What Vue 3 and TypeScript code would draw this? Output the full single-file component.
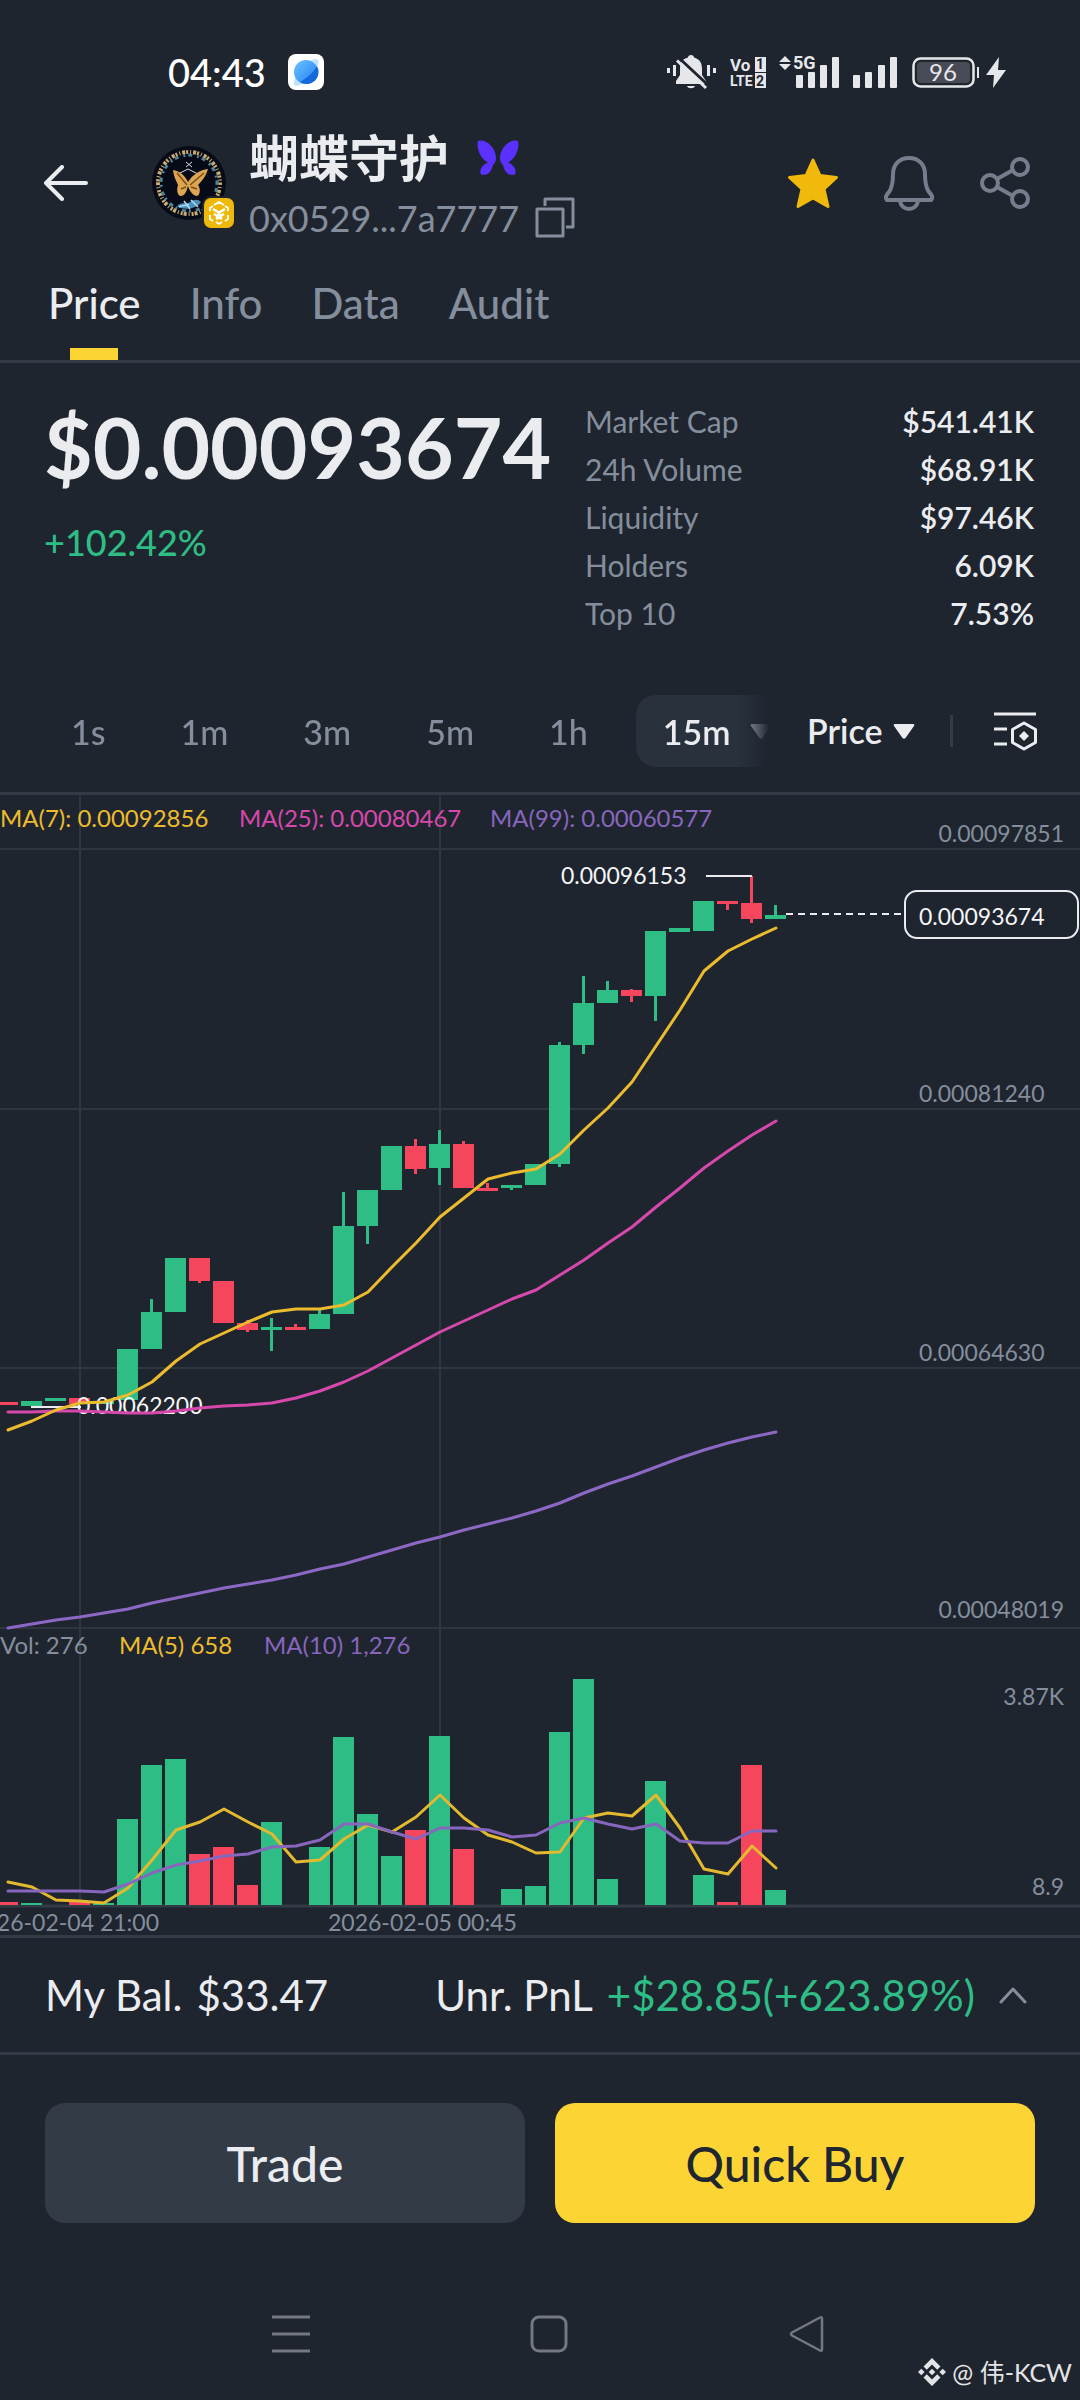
<script setup lang="ts">
import { ref } from 'vue'

interface Candle {
  up: boolean
  top: number
  bottom: number
  high?: number
  low?: number
  volTop?: number
}

const tabs = ['Price', 'Info', 'Data', 'Audit']
const activeTab = ref('Price')

const stats = [
  { label: 'Market Cap', value: '$541.41K' },
  { label: '24h Volume', value: '$68.91K' },
  { label: 'Liquidity', value: '$97.46K' },
  { label: 'Holders', value: '6.09K' },
  { label: 'Top 10', value: '7.53%' },
]

const intervals = ['1s', '1m', '3m', '5m', '1h', '15m']
const activeInterval = ref('15m')
const priceMode = ref('Price')

// Candles are spaced STEP apart; vertical values are chart units from the top edge.
const STEP = 24
const FIRST = 8
const BODY = 21
const VOL_BASE = 1110

const candles: Candle[] = [
  { up: false, top: 607, bottom: 610, volTop: 1107 },
  { up: true, top: 606, bottom: 611, volTop: 1108 },
  { up: true, top: 603, bottom: 606 },
  { up: false, top: 603, bottom: 609, volTop: 1107 },
  { up: true, top: 606, bottom: 609, volTop: 1108 },
  { up: true, top: 554, bottom: 605, volTop: 1024 },
  { up: true, top: 517, bottom: 554, high: 504, volTop: 970 },
  { up: true, top: 463, bottom: 517, volTop: 964 },
  { up: false, top: 463, bottom: 486, low: 488, volTop: 1059 },
  { up: false, top: 486, bottom: 528, volTop: 1052 },
  { up: false, top: 528, bottom: 535, high: 525, low: 537, volTop: 1090 },
  { up: true, top: 532, bottom: 535, high: 523, low: 556, volTop: 1027 },
  { up: false, top: 532, bottom: 535, high: 529 },
  { up: true, top: 519, bottom: 534, high: 514, volTop: 1052 },
  { up: true, top: 431, bottom: 519, high: 397, volTop: 942 },
  { up: true, top: 395, bottom: 431, low: 449, volTop: 1019 },
  { up: true, top: 351, bottom: 395, volTop: 1061 },
  { up: false, top: 351, bottom: 374, high: 344, low: 379, volTop: 1035 },
  { up: true, top: 349, bottom: 373, high: 335, low: 390, volTop: 941 },
  { up: false, top: 349, bottom: 393, high: 346, volTop: 1054 },
  { up: false, top: 393, bottom: 396, high: 388 },
  { up: true, top: 390, bottom: 393, low: 395, volTop: 1094 },
  { up: true, top: 369, bottom: 390, volTop: 1091 },
  { up: true, top: 250, bottom: 369, high: 247, low: 372, volTop: 937 },
  { up: true, top: 208, bottom: 250, high: 181, low: 259, volTop: 884 },
  { up: true, top: 195, bottom: 208, high: 186, volTop: 1084 },
  { up: false, top: 195, bottom: 201, high: 194, low: 207 },
  { up: true, top: 136, bottom: 201, low: 226, volTop: 986 },
  { up: true, top: 133, bottom: 137 },
  { up: true, top: 106, bottom: 136, volTop: 1080 },
  { up: false, top: 106, bottom: 109, low: 115, volTop: 1107 },
  { up: false, top: 108, bottom: 124, high: 81, low: 128, volTop: 970 },
  { up: true, top: 120, bottom: 124, high: 110, volTop: 1095 },
]

const ma7 = [635, 626, 615, 608, 607, 600, 587, 566, 549, 538, 527, 517, 514, 514, 510, 497, 472, 448, 422, 403, 384, 378, 374, 359, 335, 313, 287, 251, 215, 176, 156, 144, 133]
const ma25 = [617, 617, 616, 616, 617, 618, 618, 616, 613, 611, 610, 608, 603, 596, 587, 576, 563, 550, 537, 526, 515, 504, 495, 480, 465, 448, 432, 412, 393, 373, 356, 340, 326]
const ma99 = [833, 829, 825, 822, 818, 814, 808, 803, 798, 793, 789, 785, 780, 774, 769, 762, 755, 748, 742, 735, 729, 723, 716, 708, 698, 689, 681, 672, 663, 655, 648, 642, 637]
const volMa5 = [1087, 1092, 1105, 1106, 1108, 1093, 1065, 1035, 1027, 1014, 1027, 1039, 1067, 1065, 1044, 1030, 1037, 1022, 1000, 1023, 1040, 1047, 1058, 1057, 1023, 1018, 1021, 1000, 1033, 1074, 1079, 1051, 1073]
const volMa10 = [1096, 1096, 1096, 1096, 1097, 1089, 1078, 1070, 1066, 1061, 1059, 1052, 1051, 1045, 1029, 1029, 1037, 1044, 1033, 1033, 1035, 1042, 1040, 1028, 1023, 1029, 1034, 1029, 1046, 1048, 1048, 1036, 1036]

const xAt = (i: number): number => FIRST + i * STEP
const line = (values: number[]): string => values.map((v, i) => `${xAt(i)},${v}`).join(' ')
</script>

<template>
  <div class="screen">
    <div class="status">
      <div class="status-left">
        <span class="clock">04:43</span>
        <svg class="app-icon" viewBox="0 0 36 36" aria-hidden="true">
          <defs>
            <linearGradient id="globe" x1="0" y1="0" x2="1" y2="1">
              <stop offset="0" stop-color="#6cc4ff" />
              <stop offset="1" stop-color="#1f7cf2" />
            </linearGradient>
          </defs>
          <rect width="36" height="36" rx="8" fill="#fff" />
          <path d="M6 31c-1-3 1-7 3-10l7 8c-4 2-8 4-10 2z" fill="#bfe4fb" />
          <path d="M30 6c1 2 0 6-2 9l-6-8c3-2 6-3 8-1z" fill="#bfe4fb" />
          <circle cx="18" cy="18" r="12" fill="url(#globe)" />
          <path d="M29 12a12 12 0 0 1-17 16c7-4 13-9 17-16z" fill="#1568dc" />
        </svg>
      </div>
      <svg class="status-icons" viewBox="0 0 340 34" aria-hidden="true">
        <g fill="#e6e7ea">
          <path d="M24 0c1.700 0 3 1 3 2.500 6 1.500 8 6 8 11.500v6l4 6v3H9v-3l4-6v-6C13 8 15 4 21 2.500 21 1 22.300 0 24 0zM20 31h8c-1 3-7 3-8 0z" />
          <rect x="0" y="13" width="3" height="5" />
          <rect x="6" y="10" width="3" height="11" />
          <rect x="40" y="10" width="3" height="11" />
          <rect x="46" y="13" width="3" height="5" />
        </g>
        <path d="M12 3 41 30" stroke="#1f252f" stroke-width="3" />
        <path d="M10 5.500 39 33" stroke="#e6e7ea" stroke-width="3" />
        <g class="network" fill="#e6e7ea">
          <text x="63" y="16" font-size="17">Vo</text>
          <text x="63" y="31" font-size="14">LTE</text>
          <rect x="88" y="2" width="11" height="15" />
          <rect x="88" y="18" width="11" height="15" />
          <text x="126" y="14" font-size="18">5G</text>
          <path d="M118 1l6 6h-12zM118 15l6-6h-12z" />
          <rect x="129" y="20" width="7" height="13" rx="1" />
          <rect x="141" y="17" width="7" height="16" rx="1" />
          <rect x="153" y="10" width="7" height="23" rx="1" />
          <rect x="165" y="2" width="7" height="31" rx="1" />
          <rect x="186" y="20" width="7" height="13" rx="1" />
          <rect x="198" y="17" width="7" height="16" rx="1" />
          <rect x="211" y="10" width="7" height="23" rx="1" />
          <rect x="223" y="2" width="7" height="31" rx="1" />
          <rect x="310" y="12" width="2" height="11" />
          <path d="M332 2 319 20h8l-1 13 13-18h-8z" />
        </g>
        <g class="network" fill="#1f252f" text-anchor="middle" font-size="14">
          <text x="93" y="14">1</text>
          <text x="93" y="31">2</text>
        </g>
        <rect x="246.500" y="3.500" width="60" height="28" rx="7" fill="none" stroke="#e6e7ea" stroke-width="2.500" />
        <rect x="250" y="7" width="53" height="21" rx="4" fill="#484b55" />
        <text class="battery" x="276" y="26" text-anchor="middle" fill="#e6e7ea">96</text>
      </svg>
    </div>

    <header class="header">
      <button class="icon-btn back" aria-label="Back">
        <svg width="46" height="36" viewBox="0 0 46 36" fill="none" stroke="#eaecef" stroke-width="4" stroke-linecap="round" stroke-linejoin="round">
          <path d="M43 18H3M19 2 3 18l16 16" />
        </svg>
      </button>
      <svg class="avatar" viewBox="0 0 84 84" aria-hidden="true">
        <circle cx="38" cy="38" r="37" fill="#070b17" />
        <circle cx="38" cy="38" r="31" fill="none" stroke="#c9ac70" stroke-width="4" stroke-dasharray="2 2 1 2 3 1" />
        <circle cx="38" cy="38" r="28" fill="none" stroke="#4e8494" stroke-width="3" stroke-dasharray="2 3 4 5" />
        <path d="M35 17l6 5m0-5-6 5M27 29l10-5 10 5" stroke="#d8dbe0" stroke-width="1" fill="none" />
        <path d="M37 37C33 29 28 26 22 25c1 8 4 12 5 15-2 6 0 11 3 11 4 0 6-6 7-10 1 4 5 10 9 10 3-1 4-7 1-11 4-4 8-9 10-16-8 1-15 5-20 13z" fill="#dca552" />
        <path d="M26 28l10 12M53 28 39 40M30 44l5-2M46 44l-6-2" stroke="#7b4c16" stroke-width="1.500" />
        <path d="M26 61c5-5 9-1 13-4s8-3 11 0c-4 7-18 9-24 4z" fill="#4b91bd" />
        <path d="M28 62c5-3 7 0 10-3M40 55l7 7M33 56l6 8" stroke="#b4daf0" stroke-width="1.500" fill="none" />
        <rect x="51" y="51" width="33" height="33" rx="9" fill="#1f252f" />
        <rect x="53" y="53" width="30" height="30" rx="7" fill="#efb90b" />
        <g fill="none" stroke="#fff" stroke-width="1.800">
          <path d="M63 60l5-3 5 3M59 66v-3l3-2M77 66v-3l-3-2M59 70v4l3 2M77 70v4l-3 2M65 77l3 2 3-2" />
          <path d="M62 64l6 3.500 6-3.500M68 67v7M63 69l3 1.500v4M73 69l-3 1.500v4" stroke-width="2.500" />
        </g>
      </svg>
      <div class="identity">
        <div class="name-row">
          <h1 class="name">蝴蝶守护</h1>
          <svg width="42" height="36" viewBox="0 0 42 36" fill="#5a31ff" aria-hidden="true">
            <path d="M1 1c7-3 18 6 18 17 0 3-1 5-3 7-2 8-6 11-12 9.500-2-4 1-10 7-12C4 19-1 9 1 1z" />
            <path d="M41 1c-7-3-18 6-18 17 0 3 1 5 3 7 2 8 6 11 12 9.500 2-4-1-10-7-12C38 19 43 9 41 1z" />
          </svg>
        </div>
        <div class="address-row">
          <span class="address">0x0529...7a7777</span>
          <button class="icon-btn" aria-label="Copy address">
            <svg width="40" height="42" viewBox="0 0 40 42" fill="none" stroke="#848e9c" stroke-width="3" stroke-linejoin="round">
              <rect x="2" y="12" width="26" height="27" />
              <path d="M10 9V2h28v28h-7" />
            </svg>
          </button>
        </div>
      </div>
      <div class="actions">
        <button class="icon-btn" aria-label="Favourite">
          <svg width="52" height="52" viewBox="0 0 52 52" fill="#f0b90b" stroke="#f0b90b" stroke-width="3" stroke-linejoin="round">
            <path d="M26 3l7 15.500 16.500 2L37 32l4 17.500L26 41l-15 8.500L15 32 2.500 20.500l16.500-2z" />
          </svg>
        </button>
        <button class="icon-btn" aria-label="Alerts">
          <svg width="52" height="56" viewBox="0 0 52 56" fill="none" stroke="#767e8e" stroke-width="4" stroke-linejoin="round">
            <path d="M26 3c-10 0-16 7-16 16 0 9-1 14-4 18-3 3-4 6-2 8h44c2-2 1-5-2-8-3-4-4-9-4-18 0-9-6-16-16-16zM17 45c1 12 17 12 18 0" />
          </svg>
        </button>
        <button class="icon-btn" aria-label="Share">
          <svg width="52" height="52" viewBox="0 0 52 52" fill="none" stroke="#767e8e" stroke-width="4">
            <circle cx="11" cy="26" r="8" />
            <circle cx="41" cy="10" r="8" />
            <circle cx="41" cy="42" r="8" />
            <path d="M18 22l16-9M18 30l16 9" />
          </svg>
        </button>
      </div>
    </header>

    <nav class="tabs">
      <button
        v-for="tab in tabs"
        :key="tab"
        class="tab"
        :class="{ active: tab === activeTab }"
        @click="activeTab = tab"
      >
        {{ tab }}
      </button>
    </nav>

    <section class="summary">
      <div>
        <div class="price">$0.00093674</div>
        <div class="change">+102.42%</div>
      </div>
      <dl class="stats">
        <div v-for="stat in stats" :key="stat.label" class="stat">
          <dt>{{ stat.label }}</dt>
          <dd>{{ stat.value }}</dd>
        </div>
      </dl>
    </section>

    <div class="toolbar">
      <div class="intervals">
        <button
          v-for="item in intervals"
          :key="item"
          class="interval"
          :class="{ active: item === activeInterval }"
          @click="activeInterval = item"
        >
          {{ item }}
          <svg v-if="item === '15m'" width="22" height="15" viewBox="0 0 22 15" fill="#aab0b9" aria-hidden="true">
            <path d="M2 0h18q2 0 1 2L12.500 14q-1.500 1.500-3 0L1 2Q0 0 2 0z" />
          </svg>
        </button>
      </div>
      <label class="mode">
        <select v-model="priceMode" aria-label="Chart value">
          <option>Price</option>
        </select>
        <svg width="22" height="15" viewBox="0 0 22 15" fill="#eaecef" aria-hidden="true">
          <path d="M2 0h18q2 0 1 2L12.500 14q-1.500 1.500-3 0L1 2Q0 0 2 0z" />
        </svg>
      </label>
      <span class="divider"></span>
      <button class="icon-btn" aria-label="Chart settings">
        <svg width="44" height="40" viewBox="0 0 44 40" fill="none" stroke="#eaecef" stroke-width="3">
          <path d="M1 3h42M1 18h13M1 33h13" />
          <path d="M31 12l11.500 6.500v13L31 38l-11.500-6.500v-13z" stroke-linejoin="round" />
          <path d="M31 20l5 5-5 5-5-5z" fill="#eaecef" stroke="none" />
        </svg>
      </button>
    </div>

    <svg class="chart" viewBox="0 0 1080 1140" role="img" aria-label="Price and volume chart">
      <g stroke="#2f363f" stroke-width="2">
        <path d="M80 0V1110M440 0V1110" />
        <path d="M0 54H1080M0 314H1080M0 573H1080M0 833H1080" />
        <path d="M0 1111H1080" stroke="#333b47" stroke-width="3" />
      </g>

      <g v-for="(c, i) in candles" :key="i" :class="c.up ? 'up' : 'down'">
        <rect :x="xAt(i) - 11" :y="c.top" :width="BODY" :height="c.bottom - c.top" />
        <rect :x="xAt(i) - 2" :y="c.high ?? c.top" width="3" :height="(c.low ?? c.bottom) - (c.high ?? c.top)" />
        <rect v-if="c.volTop" :x="xAt(i) - 11" :y="c.volTop" :width="BODY" :height="VOL_BASE - c.volTop" />
      </g>

      <g stroke="#eaecef" stroke-width="2" fill="none">
        <path d="M706 81h46M31 612h50" />
        <path d="M786 119H904" stroke-dasharray="7 5" />
        <rect x="905" y="96" width="173" height="47" rx="12" />
      </g>
      <g class="axis" fill="#f5f6f7">
        <text x="561" y="89">0.00096153</text>
        <text x="919" y="130">0.00093674</text>
        <text x="77" y="619">0.00062200</text>
      </g>

      <g fill="none" stroke-width="3" stroke-linejoin="round" stroke-linecap="round">
        <polyline :points="line(ma99)" stroke="#8c68c4" />
        <polyline :points="line(ma25)" stroke="#d648ab" />
        <polyline :points="line(ma7)" stroke="#ecbc2e" />
        <polyline :points="line(volMa5)" stroke="#e3b92f" />
        <polyline :points="line(volMa10)" stroke="#8766bd" />
      </g>

      <g class="legend">
        <text x="0" y="32" fill="#ecbc2e">MA(7): 0.00092856</text>
        <text x="239" y="32" fill="#d648ab">MA(25): 0.00080467</text>
        <text x="490" y="32" fill="#8766bd">MA(99): 0.00060577</text>
        <text x="0" y="859" fill="#848e9c">Vol: 276</text>
        <text x="119" y="859" fill="#ecbc2e">MA(5) 658</text>
        <text x="264" y="859" fill="#8766bd">MA(10) 1,276</text>
      </g>
      <g class="axis" fill="#848e9c">
        <text x="1064" y="47" text-anchor="end">0.00097851</text>
        <text x="919" y="307">0.00081240</text>
        <text x="919" y="566">0.00064630</text>
        <text x="1064" y="823" text-anchor="end">0.00048019</text>
        <text x="1064" y="910" text-anchor="end">3.87K</text>
        <text x="1064" y="1100" text-anchor="end">8.9</text>
        <text x="159" y="1136" text-anchor="end">2026-02-04 21:00</text>
        <text x="328" y="1136">2026-02-05 00:45</text>
      </g>
    </svg>

    <section class="balance">
      <div class="pair"><span>My Bal.</span><span>$33.47</span></div>
      <div class="pnl">
        <span>Unr. PnL</span>
        <span class="gain">+$28.85(+623.89%)</span>
        <button class="icon-btn" aria-label="Expand">
          <svg width="28" height="18" viewBox="0 0 28 18" fill="none" stroke="#848e9c" stroke-width="3" stroke-linecap="round" stroke-linejoin="round">
            <path d="M2 16 14 3l12 13" />
          </svg>
        </button>
      </div>
    </section>

    <div class="cta">
      <button class="trade">Trade</button>
      <button class="buy">Quick Buy</button>
    </div>

    <nav class="system">
      <button class="icon-btn" aria-label="Recents">
        <svg width="38" height="38" viewBox="0 0 38 38" stroke="#75787e" stroke-width="3"><path d="M0 2h38M0 19h38M0 36h38" /></svg>
      </button>
      <button class="icon-btn" aria-label="Home">
        <svg width="38" height="38" viewBox="0 0 38 38" fill="none" stroke="#75787e" stroke-width="3"><rect x="2" y="2" width="34" height="34" rx="7" /></svg>
      </button>
      <button class="icon-btn" aria-label="Back">
        <svg width="38" height="38" viewBox="0 0 38 38" fill="none" stroke="#75787e" stroke-width="2.500" stroke-linejoin="round"><path d="M34 3.500v31q0 2-2 1L4 20.500q-2-1.500 0-3L32 2.500q2-1 2 1z" /></svg>
      </button>
    </nav>

    <footer class="credit">
      <svg width="28" height="28" viewBox="0 0 28 28" fill="#e3e4e6" aria-hidden="true">
        <path d="M14 0l8.500 8.500-3.300 3.300L14 6.600l-5.200 5.200-3.300-3.300zM3.300 10.700 6.600 14l-3.300 3.300L0 14zM24.700 10.700 28 14l-3.300 3.300-3.300-3.300zM14 10.700l3.300 3.300-3.300 3.300-3.300-3.300zM8.800 16.200l5.200 5.200 5.200-5.200 3.300 3.300L14 28l-8.500-8.500z" />
      </svg>
      <span>@ 伟-KCW</span>
    </footer>
  </div>
</template>

<style>
body {
  background: #1f252f;
}
</style>

<style scoped>
.screen {
  display: flex;
  flex-direction: column;
  min-height: 100vh;
  overflow: hidden;
  background: #1f252f;
  color: #eaecef;
  font-family: Lato, 'Noto Sans CJK SC', sans-serif;
}

button,
select {
  margin: 0;
  padding: 0;
  border: 0;
  background: none;
  color: inherit;
  font: inherit;
}

svg {
  display: block;
  flex: none;
}

.icon-btn {
  display: flex;
  align-items: center;
  justify-content: center;
}

.status {
  display: flex;
  justify-content: space-between;
  align-items: center;
  height: 36px;
  padding: 54px 73px 0 168px;
}

.status-left {
  display: flex;
  align-items: center;
  gap: 22px;
}

.clock {
  font-size: 38px;
  font-weight: 500;
  line-height: 36px;
  color: #fff;
}

.app-icon {
  width: 36px;
  height: 36px;
}

.status-icons {
  width: 340px;
  height: 34px;
  overflow: visible;
}

.network {
  font-family: Roboto, sans-serif;
  font-weight: 700;
}

.battery {
  font-size: 24px;
}

.header {
  display: flex;
  align-items: center;
  height: 114px;
  margin-top: 36px;
  padding: 0 49px 0 43px;
}

.avatar {
  width: 84px;
  height: 84px;
  margin: 8px 0 0 62px;
}

.identity {
  flex: 1;
  margin-left: 14px;
  padding-top: 8px;
}

.name-row {
  display: flex;
  align-items: center;
  gap: 28px;
  height: 62px;
}

.name {
  margin: 0;
  font-size: 50px;
  font-weight: 700;
  line-height: 60px;
}

.address-row {
  display: flex;
  align-items: center;
  gap: 16px;
  height: 58px;
}

.address {
  font-size: 36px;
  line-height: 40px;
  color: #848e9c;
}

.actions {
  display: flex;
  align-items: center;
  gap: 44px;
}

.tabs {
  display: flex;
  gap: 49px;
  height: 114px;
  margin-top: 6px;
  padding: 0 48px;
  border-bottom: 3px solid #333b47;
}

.tab {
  position: relative;
  font-size: 42px;
  font-weight: 500;
  color: #848e9c;
}

.tab.active {
  color: #eaecef;
}

.tab.active::after {
  content: '';
  position: absolute;
  left: 50%;
  bottom: 0;
  width: 48px;
  height: 12px;
  margin-left: -24px;
  background: #fcd535;
}

.summary {
  display: flex;
  justify-content: space-between;
  padding: 34px 46px 0 44px;
}

.price {
  font-size: 84px;
  font-weight: 700;
  line-height: 100px;
}

.change {
  margin-top: 21px;
  font-size: 36px;
  font-weight: 500;
  line-height: 48px;
  color: #2ebd85;
}

.stats {
  width: 449px;
  margin: 0;
}

.stat {
  display: flex;
  justify-content: space-between;
  font-size: 30px;
  line-height: 48px;
}

.stat dt {
  color: #848e9c;
}

.stat dd {
  margin: 0;
  font-weight: 600;
}

.toolbar {
  display: flex;
  align-items: center;
  height: 72px;
  margin-top: 58px;
  padding: 0 43px 25px 44px;
  border-bottom: 3px solid #333b47;
}

.intervals {
  display: flex;
  flex: 1;
  gap: 21px;
  overflow: hidden;
  mask-image: linear-gradient(to right, #000 calc(100% - 30px), transparent);
}

.interval {
  display: flex;
  flex: none;
  align-items: center;
  gap: 20px;
  height: 72px;
  padding: 0 27px;
  border-radius: 20px;
  font-size: 34px;
  font-weight: 500;
  color: #848e9c;
}

.interval.active {
  background: #29313d;
  color: #eaecef;
  font-weight: 600;
}

.mode {
  display: flex;
  align-items: center;
  gap: 10px;
  margin-left: 38px;
}

.mode select {
  appearance: none;
  font-size: 34px;
  font-weight: 600;
  line-height: 48px;
}

.divider {
  width: 3px;
  height: 32px;
  margin: 0 40px 0 35px;
  background: #333b47;
}

.chart {
  width: 100%;
  height: auto;
  border-bottom: 3px solid #333b47;
}

.up {
  fill: #2ebd85;
}

.down {
  fill: #f6465d;
}

.legend {
  font-size: 24px;
}

.axis {
  font-size: 23px;
}

.balance {
  display: flex;
  justify-content: space-between;
  align-items: center;
  height: 114px;
  padding: 0 53px 0 45px;
  border-bottom: 3px solid #333b47;
  font-size: 42px;
  line-height: 48px;
}

.pair,
.pnl {
  display: flex;
  align-items: center;
  gap: 14px;
}

.gain {
  margin-right: 10px;
  color: #2ebd85;
}

.cta {
  display: flex;
  gap: 30px;
  padding: 48px 45px 0;
}

.cta button {
  flex: 1;
  height: 120px;
  border-radius: 20px;
  font-size: 48px;
  font-weight: 500;
}

.trade {
  background: #333b47;
}

.cta .buy {
  background: #fcd535;
  color: #202630;
}

.system {
  display: flex;
  justify-content: space-between;
  margin-top: 92px;
  padding: 0 254px 0 272px;
}

.credit {
  display: flex;
  justify-content: flex-end;
  align-items: center;
  gap: 6px;
  margin-top: 2px;
  padding-right: 8px;
  font-size: 25px;
  line-height: 34px;
  color: #e3e4e6;
}
</style>
